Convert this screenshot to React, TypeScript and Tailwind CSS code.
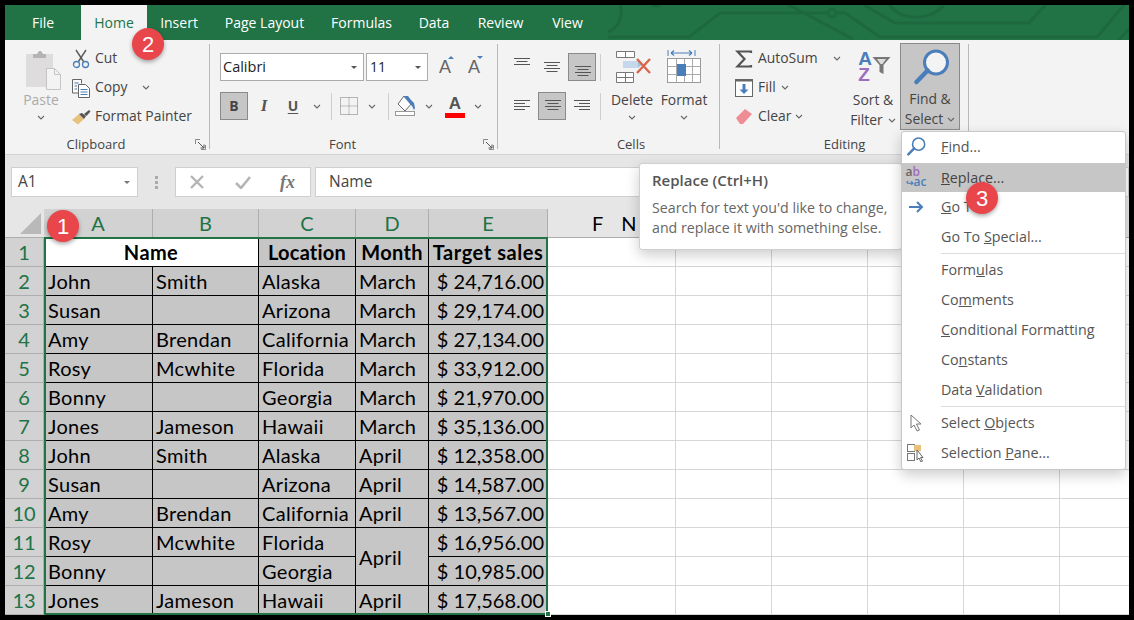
import type { ReactNode } from "react";

const rows = [
  ["John", "Smith", "Alaska", "March", "$ 24,716.00"],
  ["Susan", "", "Arizona", "March", "$ 29,174.00"],
  ["Amy", "Brendan", "California", "March", "$ 27,134.00"],
  ["Rosy", "Mcwhite", "Florida", "March", "$ 33,912.00"],
  ["Bonny", "", "Georgia", "March", "$ 21,970.00"],
  ["Jones", "Jameson", "Hawaii", "March", "$ 35,136.00"],
  ["John", "Smith", "Alaska", "April", "$ 12,358.00"],
  ["Susan", "", "Arizona", "April", "$ 14,587.00"],
  ["Amy", "Brendan", "California", "April", "$ 13,567.00"],
  ["Rosy", "Mcwhite", "Florida", "April", "$ 16,956.00"],
  ["Bonny", "", "Georgia", "", "$ 10,985.00"],
  ["Jones", "Jameson", "Hawaii", "April", "$ 17,568.00"],
];

const tabs = [
  { name: "Insert", w: "w-[64px]" },
  { name: "Page Layout", w: "w-[107px]" },
  { name: "Formulas", w: "w-[87px]" },
  { name: "Data", w: "w-[58px]" },
  { name: "Review", w: "w-[75px]" },
  { name: "View", w: "w-[59px]" },
];

function Chevron({ className = "" }: { className?: string }) {
  return (
    <svg width="8" height="5" viewBox="0 0 8 5" className={className}>
      <path d="M1 1l3 3 3-3" fill="none" stroke="#666" strokeWidth="1.1" />
    </svg>
  );
}

function Launcher() {
  return (
    <svg width="11" height="11" viewBox="0 0 11 11">
      <path d="M.5 5V.5H5M10.5 6v4.500H6" fill="none" stroke="#888" />
      <path d="M3 3l6 6M9 5.500V9H5.500" fill="none" stroke="#555" />
    </svg>
  );
}

function Scissors() {
  return (
    <svg width="18" height="20" viewBox="0 0 18 20">
      <path d="M6.500 12.500L14 1M11.500 12.500L4 1" stroke="#5a5a5a" strokeWidth="1.400" fill="none" />
      <circle cx="4.500" cy="15.500" r="3" fill="none" stroke="#4a7ebb" strokeWidth="1.300" />
      <circle cx="13.500" cy="15.500" r="3" fill="none" stroke="#4a7ebb" strokeWidth="1.300" />
    </svg>
  );
}

function CopyIcon() {
  return (
    <svg width="18" height="20" viewBox="0 0 18 20">
      <path d="M.5 1.500h9v4M6 15H.5V1.500" fill="#fff" stroke="#666" />
      <path d="M6.500 6.500h7l4 4v9h-11z" fill="#fff" stroke="#666" />
      <path d="M2.500 5h4M2.500 8h2.500M2.500 11h2.500M8.500 11.500h7M8.500 14h7M8.500 16.500h7" stroke="#4a7ebb" />
    </svg>
  );
}

function PainterIcon() {
  return (
    <svg width="20" height="16" viewBox="0 0 20 16">
      <path d="M0 11l7-6 5 5-6 5.500z" fill="#e7c27d" />
      <path d="M7 5l5 5 2-3-4-3z" fill="#555" />
      <path d="M12 5l5-4 1.500 1.500-4 4.500z" fill="#555" />
    </svg>
  );
}

function PasteIcon() {
  return (
    <svg width="36" height="40" viewBox="0 0 36 40">
      <rect x="0" y="4" width="27" height="33" fill="#dedcdd" />
      <path d="M7 4h4l2-3h2l2 3h3v4H7z" fill="#b5b3b4" />
      <path d="M20.500 18.500h8l6 6v15h-14z" fill="#f4f3f3" stroke="#c4c4c4" />
      <path d="M28.500 18.500v6h6" fill="none" stroke="#c4c4c4" />
    </svg>
  );
}

function BordersIcon() {
  return (
    <svg width="18" height="18" viewBox="0 0 18 18">
      <rect x=".5" y=".5" width="17" height="17" fill="none" stroke="#777" strokeDasharray="1 1" />
      <path d="M9 .5v17M.5 9h17" stroke="#888" strokeDasharray="1 1" />
    </svg>
  );
}

function FillIcon() {
  return (
    <svg width="22" height="22" viewBox="0 0 22 22">
      <path d="M9 1l8 7-7 8-7-7z" fill="#fff" stroke="#666" />
      <path d="M9 2l1-1h3l3 4 3 3 1 5-1 2-2-4-2-2z" fill="#4a7ebb" />
      <rect x=".5" y="16.500" width="19" height="4" fill="#fff" stroke="#999" />
    </svg>
  );
}

function AlignLines({ y, kind }: { y: number[]; kind: "left" | "center" | "right" }) {
  return (
    <svg width="28" height="26" viewBox="0 0 28 26">
      {y.map((v, i) => {
        const long = i % 2 === 0;
        const len = long ? 16 : 11;
        const x = kind === "left" ? 6 : kind === "right" ? 22 - len : 14 - len / 2;
        return <path key={v} d={`M${x} ${v + 0.5}h${len}`} stroke="#555" />;
      })}
    </svg>
  );
}

function DeleteIcon() {
  return (
    <svg width="40" height="36" viewBox="0 0 40 36">
      <path d="M2.500 2.500h9v6h-9zM11.500 2.500h9v6h-9zM2.500 23.500h9v5h-9zM11.500 23.500h8v5h-8zM2.500 28.500h9v5h-9zM11.500 28.500h8v5h-8z" fill="#fff" stroke="#777" />
      <rect x="9" y="12" width="15" height="7" fill="#c5d7ea" />
      <path d="M24 12l4 3.500-4 3.500z" fill="#a9c2dc" />
      <path d="M23 10l13 14M36 10L23 24" stroke="#d9654a" strokeWidth="2.400" />
    </svg>
  );
}

function FormatIcon() {
  return (
    <svg width="36" height="36" viewBox="0 0 36 36">
      <path d="M1 1v6M28 1v6" stroke="#4a7ebb" />
      <path d="M4 4h21M4 4l3-2.500M4 4l3 2.500M25 4l-3-2.500M25 4l-3 2.500" stroke="#4a7ebb" fill="none" strokeWidth="1.200" />
      <rect x=".5" y="9.500" width="33" height="24" fill="#fff" stroke="#999" />
      <path d="M9.500 9.500v24M17.500 9.500v24M25.500 9.500v24M.5 17.500h33M.5 25.500h33" stroke="#aaa" />
      <rect x="10" y="15" width="9" height="12" fill="#4a7ebb" />
    </svg>
  );
}

function Magnifier({ size, white }: { size: number; white?: boolean }) {
  return (
    <svg width={size} height={size} viewBox="0 0 36 36">
      <circle cx="22" cy="13.500" r="11.500" fill={white ? "#f3f3f3" : "none"} stroke="#4a7ebb" strokeWidth="3" />
      <path d="M13.500 21.500L2.500 33" stroke="#4a7ebb" strokeWidth="4.500" strokeLinecap="round" />
    </svg>
  );
}

function SmallButton({ icon, label, chevron, chevronGap }: { icon: ReactNode; label: string; chevron?: boolean; chevronGap?: string }) {
  return (
    <div className="flex h-[29px] items-center">
      <div className="flex w-[23px] shrink-0 justify-start">{icon}</div>
      <span>{label}</span>
      {chevron && <Chevron className={chevronGap} />}
    </div>
  );
}

function Group({ label, width, labelClass = "", launcher, children }: { label: string; width: string; labelClass?: string; launcher?: boolean; children: ReactNode }) {
  return (
    <div className={`relative flex shrink-0 flex-col pt-[4px] ${width}`}>
      <div className="flex h-[91px]">{children}</div>
      <div className={`flex h-[19px] items-center justify-center text-[13px] ${labelClass}`}>{label}</div>
      {launcher && (
        <div className="absolute bottom-[4px] right-[4px]">
          <Launcher />
        </div>
      )}
      <div className="absolute bottom-[5px] right-0 top-[4px] w-px bg-[#b9b9b9]" />
    </div>
  );
}

function Separator({ className = "" }: { className?: string }) {
  return <div className={`h-[27px] w-px bg-[#cfcfcf] ${className}`} />;
}

function Circuit() {
  return (
    <svg className="absolute left-0 top-0" width="1124" height="35" viewBox="5 5 1124 35">
      <g fill="none" stroke="#1e6840" strokeWidth="3">
        <path d="M620 3c4 14-2 25-12 29" />
        <path d="M608 37h81l31-24h107M837 13h8l35 24h217l28-33" />
        <path d="M787 4l66 35" />
        <path d="M864 5l31 18h134l17-19" />
        <path d="M889 3c8 19 45 19 56 0" />
        <path d="M1118 41l12-13" />
        <path d="M651 3c2 4 9 4 11 0" />
      </g>
      <circle cx="832" cy="13" r="4" fill="#217346" stroke="#1e6840" strokeWidth="2.500" />
    </svg>
  );
}

function Ribbon() {
  return (
    <div className="flex h-[115px] border-b border-[#d4d4d4] bg-[#f3f3f3] text-[13.900px] text-[#444]">
      <Group label="Clipboard" width="w-[205px]" launcher labelClass="pr-[23px]">
        <div className="ml-[17px] flex w-[38px] flex-col items-center text-[#aaa]">
          <div className="flex h-[46px] items-end pl-[6px]">
            <PasteIcon />
          </div>
          <div className="flex h-[20px] items-center">Paste</div>
          <div className="flex h-[14px] items-center">
            <Chevron />
          </div>
        </div>
        <div className="ml-[12px] flex flex-col">
          <SmallButton icon={<Scissors />} label="Cut" />
          <SmallButton icon={<CopyIcon />} label="Copy" chevron chevronGap="ml-[14px]" />
          <SmallButton icon={<PainterIcon />} label="Format Painter" />
        </div>
      </Group>

      <Group label="Font" width="w-[288px]" launcher labelClass="pr-[23px]">
        <div className="ml-[10px] flex flex-col pt-[9px]">
          <div className="flex h-[28px] items-center">
            <div className="flex h-[28px] w-[144px] items-center justify-between border border-[#ababab] bg-white pl-[2px] pr-[6px] text-[14.500px] text-[#222]">
              Calibri
              <span className="h-0 w-0 border-x-[3px] border-t-[3px] border-x-transparent border-t-[#555]" />
            </div>
            <div className="ml-[2px] flex h-[28px] w-[62px] items-center justify-between border border-[#ababab] bg-white pl-[3px] pr-[6px] text-[#222]">
              11
              <span className="h-0 w-0 border-x-[3px] border-t-[3px] border-x-transparent border-t-[#555]" />
            </div>
            <div className="relative ml-[4px] flex w-[26px] justify-center font-['Liberation_Sans',sans-serif] text-[18px] text-[#666]">
              A
              <span className="absolute right-[4px] top-[2px] h-0 w-0 border-x-[3.500px] border-b-[3px] border-x-transparent border-b-[#4a7ebb]" />
            </div>
            <div className="relative ml-[3px] flex w-[26px] justify-center font-['Liberation_Sans',sans-serif] text-[18px] text-[#666]">
              A
              <span className="absolute right-[4px] top-[2px] h-0 w-0 border-x-[3.500px] border-t-[3px] border-x-transparent border-t-[#4a7ebb]" />
            </div>
          </div>
          <div className="mt-[11px] flex h-[28px] items-center">
            <div className="flex h-[28px] w-[28px] items-center justify-center border border-[#8a8a8a] bg-[#c6c6c6] font-bold text-[#444]">B</div>
            <div className="ml-[2px] flex w-[28px] justify-center font-['Liberation_Serif',serif] text-[17px] font-bold italic text-[#555]">I</div>
            <div className="ml-px flex w-[28px] justify-center font-bold text-[#555] underline underline-offset-2">U</div>
            <div className="ml-[3px] flex w-[14px] justify-center">
              <Chevron />
            </div>
            <Separator className="ml-[7px]" />
            <div className="ml-[4px] flex w-[26px] justify-center">
              <BordersIcon />
            </div>
            <div className="ml-[3px] flex w-[14px] justify-center">
              <Chevron />
            </div>
            <Separator className="ml-[9px]" />
            <div className="ml-[3px] flex w-[28px] justify-center">
              <FillIcon />
            </div>
            <div className="ml-[2px] flex w-[14px] justify-center">
              <Chevron />
            </div>
            <div className="ml-[5px] flex w-[28px] flex-col items-center font-['Liberation_Sans',sans-serif] text-[17px] font-bold leading-[18px] text-[#555]">
              A
              <div className="h-[5px] w-[20px] bg-[#f00]" />
            </div>
            <div className="ml-[2px] flex w-[14px] justify-center">
              <Chevron />
            </div>
          </div>
        </div>
      </Group>

      <Group label="Cells" width="w-[222px]" labelClass="pl-[44px]">
        <div className="ml-[10px] flex flex-col pt-[9px]">
          <div className="flex h-[28px] gap-[2px]">
            <div className="w-[28px]">
              <AlignLines y={[5, 8, 11]} kind="center" />
            </div>
            <div className="w-[28px]">
              <AlignLines y={[9, 12, 15, 18]} kind="center" />
            </div>
            <div className="h-[28px] w-[28px] border border-[#8a8a8a] bg-[#c6c6c6]">
              <AlignLines y={[12, 15, 18, 21]} kind="center" />
            </div>
          </div>
          <div className="mt-[11px] flex h-[28px] gap-[2px]">
            <div className="w-[28px]">
              <AlignLines y={[8, 11, 14, 17]} kind="left" />
            </div>
            <div className="h-[28px] w-[28px] border border-[#8a8a8a] bg-[#c6c6c6]">
              <AlignLines y={[7, 10, 13, 16]} kind="center" />
            </div>
            <div className="w-[28px]">
              <AlignLines y={[8, 11, 14, 17]} kind="right" />
            </div>
          </div>
        </div>
        <div className="ml-[4px] flex flex-col pt-[10px]">
          <Separator />
          <Separator className="mt-[12px]" />
        </div>
        <div className="ml-[5px] flex w-[52px] flex-col items-center">
          <div className="flex h-[46px] items-center pl-[3px]">
            <DeleteIcon />
          </div>
          <div className="flex h-[20px] items-center">Delete</div>
          <div className="flex h-[14px] items-center">
            <Chevron />
          </div>
        </div>
        <div className="flex w-[52px] flex-col items-center">
          <div className="flex h-[46px] items-center pl-[1px]">
            <FormatIcon />
          </div>
          <div className="flex h-[20px] items-center">Format</div>
          <div className="flex h-[14px] items-center">
            <Chevron />
          </div>
        </div>
      </Group>

      <Group label="Editing" width="w-[249px]">
        <div className="ml-[15px] flex w-[111px] flex-col">
          <SmallButton
            icon={
              <svg width="18" height="20" viewBox="0 0 18 20">
                <path d="M16 4V2.500H2.500L9.500 10l-7 7.500H16V16" fill="none" stroke="#555" strokeWidth="2.200" />
              </svg>
            }
            label="AutoSum"
            chevron
            chevronGap="ml-[15px]"
          />
          <SmallButton
            icon={
              <svg width="18" height="18" viewBox="0 0 18 18">
                <rect x=".5" y=".5" width="17" height="17" fill="#fff" stroke="#666" />
                <path d="M.5 1.500h17" stroke="#666" strokeWidth="2" />
                <path d="M9 5v7" stroke="#4a7ebb" strokeWidth="3" />
                <path d="M4.500 10.500L9 15l4.500-4.500z" fill="#4a7ebb" />
              </svg>
            }
            label="Fill"
            chevron
            chevronGap="ml-[5px]"
          />
          <SmallButton
            icon={
              <svg width="18" height="18" viewBox="0 0 18 18">
                <path d="M1 10l9-9 7 5-9 10H5z" fill="#ee8d96" />
              </svg>
            }
            label="Clear"
            chevron
            chevronGap="ml-[4px]"
          />
        </div>
        <div className="flex w-[54px] flex-col items-center">
          <div className="flex h-[46px] w-full items-center justify-center pl-[3px]">
            <div className="flex flex-col font-['Liberation_Sans',sans-serif] text-[19px] font-bold leading-[16px]">
              <span className="text-[#4a7ebb]">A</span>
              <span className="text-[#a06cc0]">Z</span>
            </div>
            <svg width="19" height="19" viewBox="0 0 19 19" className="mb-[3px]">
              <path d="M.5 1h18l-7 8v9l-4-2V9z" fill="#777" />
              <path d="M5 3h9l-3.500 5h-2z" fill="#ddd" />
            </svg>
          </div>
          <div className="flex h-[20px] items-center whitespace-nowrap">Sort &amp;</div>
          <div className="flex h-[20px] items-center whitespace-nowrap">
            Filter
            <Chevron className="ml-[5px]" />
          </div>
        </div>
        <div className="-mt-px flex h-[87px] w-[60px] flex-col items-center border border-[#8a8a8a] bg-[#c6c6c6]">
          <div className="flex h-[46px] items-center pl-[3px]">
            <Magnifier size={36} white />
          </div>
          <div className="flex h-[20px] items-center whitespace-nowrap">Find &amp;</div>
          <div className="flex h-[20px] items-center whitespace-nowrap">
            Select
            <Chevron className="ml-[4px]" />
          </div>
        </div>
      </Group>
    </div>
  );
}

function FormulaBar() {
  return (
    <div className="flex h-[54px] bg-[#e6e6e6] pl-[6px] pt-[12px] text-[15.500px] text-[#444]">
      <div className="flex h-[30px] w-[127px] items-center justify-between border border-[#cfcfcf] bg-white pl-[6px] pr-[7px]">
        A1
        <span className="h-0 w-0 border-x-[3.500px] border-t-[3.500px] border-x-transparent border-t-[#777]" />
      </div>
      <div className="ml-[16px] flex h-[30px] w-[4px] flex-col items-center justify-center gap-[2px]">
        <span className="h-[3px] w-[3px] bg-[#aaa]" />
        <span className="h-[3px] w-[3px] bg-[#aaa]" />
        <span className="h-[3px] w-[3px] bg-[#aaa]" />
      </div>
      <div className="ml-[17px] flex h-[30px] w-[136px] items-center border border-[#cfcfcf] bg-white">
        <svg width="14" height="14" viewBox="0 0 14 14" className="ml-[14px]">
          <path d="M1 1l12 12M13 1L1 13" stroke="#b5b5b5" strokeWidth="2.400" />
        </svg>
        <svg width="16" height="14" viewBox="0 0 16 14" className="ml-[31px]">
          <path d="M1 8l5 5L15 2" fill="none" stroke="#b5b5b5" strokeWidth="2.600" />
        </svg>
        <span className="ml-[29px] font-['Liberation_Serif',serif] text-[18px] font-bold italic text-[#777]">fx</span>
      </div>
      <div className="ml-[4px] flex h-[30px] flex-1 items-center border border-[#cfcfcf] bg-white pl-[13px]">Name</div>
    </div>
  );
}

function Sheet() {
  const blanks = ["F", "G", "H", "I", "J", "K"];
  const headerCell = "flex items-center justify-center border-b border-r border-[#aeaeae] bg-[#d2d2d2] text-[#217346]";
  const cell = "flex items-center overflow-hidden whitespace-nowrap border-b border-r border-black bg-[#c6c6c6]";
  const textCell = `${cell} pl-[3px] tracking-[0.3px]`;
  const blankCell = "border-b border-r border-[#d6d6d6] bg-white";

  return (
    <div className="relative grid h-[406px] grid-cols-[39px_109px_106px_97px_73px_119px_128px_96px_96px_96px_96px_69px] auto-rows-[29px] font-['Lato',sans-serif] text-[20px] text-black">
      <div className="flex items-end justify-end border-b border-[#aeaeae] bg-[#e6e6e6] pb-[3px] pr-[3px]">
        <span className="h-0 w-0 border-b-[21px] border-l-[21px] border-b-[#b9b9b9] border-l-transparent" />
      </div>
      {["A", "B", "C", "D", "E"].map((c) => (
        <div key={c} className={headerCell}>
          {c}
        </div>
      ))}
      <div className="flex items-center gap-[18px] border-b border-[#aeaeae] bg-[#e6e6e6] pl-[44px]">
        <span>F</span>
        <span>N</span>
      </div>
      {blanks.slice(1).map((c) => (
        <div key={c} className="border-b border-[#aeaeae] bg-[#e6e6e6]" />
      ))}

      <div className={headerCell}>1</div>
      <div className="col-span-2 flex items-center justify-center border-b border-r border-black bg-white font-bold tracking-[0.4px]">Name</div>
      <div className={`${cell} justify-center font-bold tracking-[0.2px]`}>Location</div>
      <div className={`${cell} justify-center font-bold tracking-[0.3px]`}>Month</div>
      <div className={`${cell} justify-center font-bold tracking-[0.55px]`}>Target sales</div>
      {blanks.map((c, i) => (
        <div key={c} className={i === 5 ? "border-b border-[#d6d6d6] bg-white" : blankCell} />
      ))}

      {rows.map((r, i) => (
        <div key={i} className="contents">
          <div className={headerCell}>{i + 2}</div>
          <div className={`${textCell} pl-[4px]`}>{r[0]}</div>
          <div className={textCell}>{r[1]}</div>
          <div className={textCell}>{r[2]}</div>
          {i === 9 ? (
            <div className={`${textCell} row-span-2`}>{r[3]}</div>
          ) : i === 10 ? null : (
            <div className={textCell}>{r[3]}</div>
          )}
          <div className={`${cell} justify-end pr-[3px]`}>{r[4]}</div>
          {blanks.map((c, j) => (
            <div key={c} className={j === 5 ? "border-b border-[#d6d6d6] bg-white" : blankCell} />
          ))}
        </div>
      ))}

      {/* selection outline */}
      <div className="pointer-events-none absolute left-[39px] top-[28px] h-[378px] w-[504px] border-2 border-[#217346]" />
      <div className="absolute left-[541px] top-[403px] h-[4px] w-[4px] bg-[#217346] outline outline-1 outline-white" />
    </div>
  );
}

function MenuItem({ icon, a, u, b, active }: { icon?: ReactNode; a?: string; u: string; b?: string; active?: boolean }) {
  return (
    <div className={`flex items-center ${active ? "mt-px h-[29px] bg-[#c6c6c6] text-[#444]" : "h-[30px] pb-px"}`}>
      <div className="flex w-[39px] shrink-0 justify-center pr-[11px]">{icon}</div>
      <span>
        {a}
        <u>{u}</u>
        {b}
      </span>
    </div>
  );
}

function MenuRule() {
  return (
    <div className="flex h-[3px] items-center pl-[39px]">
      <div className="h-px w-full bg-[#dcdcdc]" />
    </div>
  );
}

function FindMenu() {
  return (
    <div className="absolute left-[901px] top-[131px] flex h-[339px] w-[225px] flex-col rounded-[3px] border border-[#c8c8c8] bg-white text-[14.300px] text-[#555] shadow-[0_5px_14px_rgba(0,0,0,0.2)]">
      <MenuItem icon={<Magnifier size={19} />} u="F" b="ind..." />
      <MenuItem
        active
        icon={
          <div className="flex flex-col text-[12px] font-semibold leading-[10px]">
            <span>
              <span className="text-[#666]">a</span>
              <span className="text-[#a06cc0]">b</span>
            </span>
            <span className="whitespace-nowrap text-[#4a7ebb]">
              <span className="text-[9px]">↪</span>ac
            </span>
          </div>
        }
        u="R"
        b="eplace..."
      />
      <MenuItem
        icon={
          <svg width="15" height="12" viewBox="0 0 15 12">
            <path d="M0 6h13M8 1l5 5-5 5" fill="none" stroke="#4a7ebb" strokeWidth="2" />
          </svg>
        }
        u="G"
        b="o To"
      />
      <MenuItem a="Go To " u="S" b="pecial..." />
      <MenuRule />
      <MenuItem a="Form" u="u" b="las" />
      <MenuItem a="Co" u="m" b="ments" />
      <MenuItem u="C" b="onditional Formatting" />
      <MenuItem a="Co" u="n" b="stants" />
      <MenuItem a="Data " u="V" b="alidation" />
      <MenuRule />
      <MenuItem
        icon={
          <svg width="12" height="18" viewBox="0 0 12 18">
            <path d="M1 1v13l3-3 3 6 2.500-1-3-6H11z" fill="#fff" stroke="#777" />
          </svg>
        }
        a="Select "
        u="O"
        b="bjects"
      />
      <MenuItem
        icon={
          <svg width="18" height="18" viewBox="0 0 18 18">
            <rect x=".5" y=".5" width="7" height="7" fill="#fff" stroke="#777" />
            <rect x="7" y="1" width="7" height="6" fill="#e7c27d" />
            <rect x=".5" y="9.500" width="7" height="7" fill="#fff" stroke="#777" />
            <path d="M10 6v10l2-2 2 4 1.500-.8-2-3.700H16z" fill="#fff" stroke="#666" />
          </svg>
        }
        a="Selection "
        u="P"
        b="ane..."
      />
    </div>
  );
}

function Badge({ n, className }: { n: number; className: string }) {
  return (
    <div className={`absolute flex h-[32px] w-[32px] items-center justify-center rounded-full bg-[#e8464a] font-['Liberation_Sans',sans-serif] text-[22px] text-white shadow-[0_2px_4px_rgba(0,0,0,0.35)] ${className}`}>
      {n}
    </div>
  );
}

export default function App() {
  return (
    <div className="relative flex h-[620px] w-[1134px] flex-col overflow-hidden bg-black p-[5px] font-['Open_Sans',sans-serif]">
      <div className="relative flex h-[35px] shrink-0 bg-[#217346] text-[14px] text-white">
        <Circuit />
        <div className="relative flex w-[76px] items-center justify-center">File</div>
        <div className="relative flex w-[66px] items-center justify-center bg-[#f3f3f3] text-[#217346]">Home</div>
        {tabs.map((t) => (
          <div key={t.name} className={`relative flex items-center justify-center ${t.w}`}>
            {t.name}
          </div>
        ))}
      </div>
      <Ribbon />
      <FormulaBar />
      <Sheet />

      {/* hover tooltip */}
      <div className="absolute left-[639px] top-[163px] h-[87px] w-[263px] rounded-[3px] border border-[#d0d0d0] bg-white pl-[12px] pt-[6px] text-[14.200px] text-[#666] shadow-[0_5px_14px_rgba(0,0,0,0.2)]">
        <div className="text-[15px] font-semibold leading-[20px] text-[#555]">Replace (Ctrl+H)</div>
        <div className="mt-[8px] leading-[20px]">Search for text you'd like to change,</div>
        <div className="leading-[20px]">and replace it with something else.</div>
      </div>
      <FindMenu />

      <Badge n={1} className="left-[47px] top-[210px]" />
      <Badge n={2} className="left-[132px] top-[28px]" />
      <Badge n={3} className="left-[966px] top-[182px]" />
    </div>
  );
}
